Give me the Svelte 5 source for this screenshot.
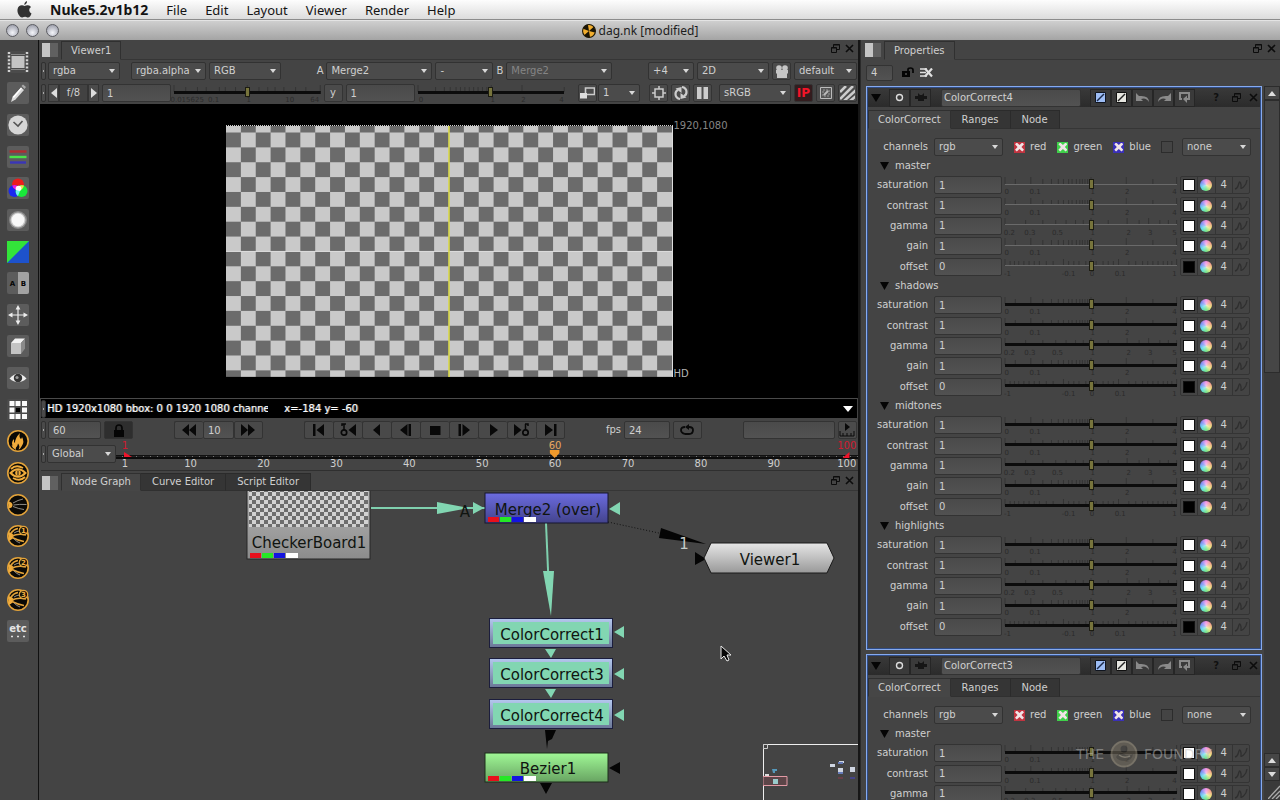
<script>
  const menus = ['File', 'Edit', 'Layout', 'Viewer', 'Render', 'Help'];
  const tools = ['Image', 'Draw', 'Time', 'Channel', 'Color', 'Filter', 'Keyer', 'Merge', 'Transform', '3D', 'Views', 'Other', 'FurnaceCore', 'Ocula', 'Furnace', 'Furnace 1', 'Furnace 2', 'Furnace 3', 'etc'];
  const transport = ['First frame', 'Previous key', 'Play backward', 'Step back', 'Stop', 'Step forward', 'Play forward', 'Next key', 'Last frame'];
  const frames = [1, 10, 20, 30, 40, 50, 60, 70, 80, 90, 100];
  const framePos = (f) => ((9 + (f - 1) * 7.3) / 743) * 100;

  const gradeScale = {
    ticks: [0, 6, 15, 22, 27, 31, 34, 37, 39, 41.5, 43.5, 45, 46.5, 48, 50, 70.5, 86, 99.8],
    tall: [0, 15, 50, 70.5, 99.8],
    marks: [[1, '0'], [17.5, '0.1'], [51, '1'], [71, '2'], [98.5, '4']]
  };
  const gammaScale = {
    ticks: [0, 12, 22, 29.5, 35.5, 41, 45.5, 50, 60, 71, 78, 83.5, 90, 95, 99.8],
    tall: [0, 50, 71, 83.5],
    marks: [[2.5, '0.2'], [14.5, '0.3'], [30.5, '0.5'], [51, '1'], [72, '2'], [84.5, '3'], [98.5, '5']]
  };
  const offsetScale = {
    ticks: [0, 3, 5.5, 8, 11, 14, 17, 20, 24, 28, 34, 37, 40, 43, 47, 50, 53, 57, 60, 63, 66, 72, 76, 80, 83, 86, 89, 92, 94.5, 97, 99.8],
    tall: [0, 34, 50, 66, 99.8],
    marks: [[1.5, '-1'], [37, '-0.1'], [50.5, '0'], [67, '0.1'], [98.5, '1']]
  };
  const gainScale = {
    ticks: [0, 8, 16, 22, 31, 35, 42, 50, 58, 64, 69, 75, 83, 90, 99.8],
    tall: [0, 50, 99.8],
    marks: [[9, '0.015625'], [27, '0.1'], [51, '1'], [79, '10'], [96, '64']]
  };
  const viewGammaScale = {
    ticks: [0, 12, 18, 22, 26, 29, 32, 35, 38, 41, 44, 47, 50, 71, 99.8],
    tall: [0, 50, 71],
    marks: [[2, '0'], [51, '1'], [72, '2'], [98, '4']]
  };

  const knobs = [
    ['saturation', '1', gradeScale],
    ['contrast', '1', gradeScale],
    ['gamma', '1', gammaScale],
    ['gain', '1', gradeScale],
    ['offset', '0', offsetScale]
  ];
  const panels = [
    { name: 'ColorCorrect4', dimMaster: true, bands: ['master', 'shadows', 'midtones', 'highlights'], knobs },
    { name: 'ColorCorrect3', dimMaster: false, bands: ['master'], knobs: knobs.slice(0, 3) }
  ];
  const grades = [['ColorCorrect1', 619], ['ColorCorrect3', 659], ['ColorCorrect4', 700]];
  const chips = ['#e8101c', '#25e825', '#1414e0', '#ffffff'];
</script>

{#snippet drop(label, value, cls)}
  <span class="drop {cls}">
    <select aria-label={label}><option>{value}</option></select>
  </span>
{/snippet}

{#snippet slider(label, scale, cls)}
  <span class="slider {cls}">
    <svg class="ticks" aria-hidden="true">
      {#each scale.ticks as t}
        <line x1="{t}%" x2="{t}%" y1={scale.tall.includes(t) ? 1 : 3} y2="8" />
      {/each}
      {#each scale.marks as [x, s]}
        <text x="{x}%" y="18">{s}</text>
      {/each}
    </svg>
    <input type="range" aria-label="{label} slider" min="0" max="100" value="50" />
  </span>
{/snippet}

{#snippet floatIcon()}
  <svg width="9" height="9" viewBox="0 0 9 9" fill="none" stroke="#0c0c0c"><path d="M2.5 3V.5h6v5H6M2.5 1h6" /><path d="M.5 3.5h5v5h-5zM.5 4h5" /></svg>
{/snippet}

{#snippet closeIcon()}
  <svg width="9" height="9" viewBox="0 0 9 9" fill="none" stroke="#0c0c0c" stroke-width="1.6"><path d="M1 1l7 7M8 1l-7 7" /></svg>
{/snippet}

{#snippet windowButtons()}
  <span class="winbtns">
    <button aria-label="Float">{@render floatIcon()}</button>
    <button aria-label="Close">{@render closeIcon()}</button>
  </span>
{/snippet}

{#snippet toolIcon(i)}
  <svg width="22" height="22" viewBox="0 0 22 22">
    {#if i < 12 || i === 18}<rect width="22" height="22" rx="2" fill={i === 0 || i === 11 ? '#4b4b4b' : '#5c5c5c'} />{/if}
    {#if i === 0}
      <rect x="4.500" y="5" width="13" height="12" fill="#c4c4c4" />
      <path d="M2 1v20M20 1v20" stroke="#d2d2d2" stroke-width="2.400" stroke-dasharray="2 1.600" /><path d="M4 3.500h14M4 18.500h14" stroke="#888" />
    {:else if i === 1}
      <path d="M4 20l1.500-5L14 5.500l3 2.500-8.500 9.500z" fill="#d8d8d8" /><path d="M5.500 15l8.500-9.500 1 1L7 16z" fill="#fff" /><path d="M14.500 4l1.500-1.500 3 2.500-1.500 2z" fill="#a8a8a8" />
    {:else if i === 2}
      <circle cx="11" cy="11" r="9.600" fill="#d6d6d6" /><path d="M6.500 8l4.500 4 4.500-5" stroke="#555" stroke-width="1.600" fill="none" />
    {:else if i === 3}
      <path d="M2.500 5.500h17" stroke="#b02c30" stroke-width="2.400" /><path d="M2.500 11h17" stroke="#49e449" stroke-width="2.400" /><path d="M3 16.500h16" stroke="#3a35b8" stroke-width="2.400" />
    {:else if i === 4}
      <circle cx="11" cy="7.500" r="6" fill="#ee1c1c" /><circle cx="7.500" cy="14" r="6" fill="#1a28f0" /><circle cx="14.500" cy="14" r="6" fill="#18e83a" />
      <path d="M5.200 8.500A6 6 0 0 1 11.500 9.500L9 13A6 6 0 0 1 5.200 8.500z" fill="#f020d8" /><path d="M11.500 9.500Q14 7.500 17 8.500 16 12.500 12.500 13.500z" fill="#f0e050" /><circle cx="11.500" cy="11.500" r="2.800" fill="#fff" /><path d="M9 13l4 1-2 5q-3-2-2-6z" fill="#70f0f0" />
    {:else if i === 5}
      <circle cx="11" cy="11" r="9" fill="#8a8a8a" /><circle cx="11" cy="11" r="7.600" fill="#c8c8c8" /><circle cx="11" cy="11" r="6.400" fill="#f8f8f8" />
    {:else if i === 6}
      <path d="M0 0h22v22H0z" fill="#1d52cc" /><path d="M0 0h22L0 22z" fill="#33e43a" />
    {:else if i === 7}
      <path d="M11 0h9a2 2 0 0 1 2 2v18a2 2 0 0 1-2 2h-9z" fill="#a2a2a2" />
      <text x="5.500" y="14" class="ab">A</text><text x="16.500" y="14" class="ab">B</text>
    {:else if i === 8}
      <path d="M11 4v14M4 11h14" stroke="#ececec" stroke-width="1.200" /><path d="M11 1l2.400 4.500H8.600zM11 21l2.400-4.500H8.600zM1 11l4.500-2.400v4.800zM21 11l-4.500-2.400v4.800z" fill="#ececec" />
    {:else if i === 9}
      <path d="M4 8l10 0v11H4z" fill="#c4c4c4" /><path d="M4 8l4-4.500h10L14 8z" fill="#f2f2f2" /><path d="M14 8l4-4.500v10L14 19z" fill="#8a8a8a" />
    {:else if i === 10}
      <path d="M2.500 11.500Q11 2 19.500 11.500 11 19 2.500 11.500z" fill="#eee" /><circle cx="11" cy="11" r="4.200" fill="#333" /><circle cx="10" cy="10.500" r="1.600" fill="#999" />
    {:else if i === 11}
      <g fill="#fafafa"><path d="M2.500 2h5v5h-5zM8.500 2h5v5h-5zM15 2h5v5h-5zM2.500 8.500h5v5h-5zM15 8.500h5v5h-5zM2.500 15h5v5h-5zM8.500 15h5v5h-5zM15 15h5v5h-5z" /></g><path d="M9 9h4v4H9z" fill="#000" />
    {:else if i === 18}
      <text x="11" y="11.500" class="etc">etc</text><path d="M4 16.500h2M10 16.500h2M16 16.500h2" stroke="#e0e0e0" stroke-width="1.600" />
    {:else}
      <circle cx="11" cy="11" r="10.200" fill="#0b0a06" stroke="#e3a33a" stroke-width="1.600" />
      {#if i === 12}
        <path d="M5.500 15.500Q4 12 7 9q-.5 3 1 4Q8 8 13 3q-1.500 4 1 6 1-1 1-2 3 5-.5 9.500-1.500 3-3 3 2-3-.5-6-.5 3-2 4-.5 1 0 2.500-3-1-4.500-4.500z" fill="#f0ac3c" />
      {:else if i === 13}
        <path d="M4 7Q9 2 16 6M18 15q-5 5-12 1" stroke="#f0ac3c" stroke-width="2" fill="none" /><path d="M3.500 11Q11 3.500 18.500 11 11 18.500 3.500 11z" fill="none" stroke="#f0ac3c" stroke-width="2" /><circle cx="11" cy="11" r="2.800" fill="#f0ac3c" /><path d="M11 9v4" stroke="#111" />
      {:else if i === 14}
        <path d="M1.500 7.500Q5.500 8 5.500 11t-4 3.500z" fill="#f0ac3c" />
        <g stroke="#8f8d86" fill="none"><path d="M6 9q5-3 10-4M6.500 11q6-1 13-.5M6 12.500q6 2.500 11 3" /></g>
      {:else}
        <path d="M1.500 7Q6.500 8 6.500 11t-5 5z" fill="#f0ac3c" />
        <g stroke="#e3a33a" stroke-width="1.600" fill="none"><path d="M4 8Q7 4 11 3.500M5 11q6-3 14-1M5 12.500q6 3 12 4" /></g>
        <g stroke="#8f8d86" fill="none"><path d="M7 8q3-2 6-2M7 14q3 3 6 4" /></g>
        <circle cx="16.500" cy="5.500" r="4.200" fill="#1a1408" stroke="#e3a33a" stroke-width="1.200" /><text x="16.500" y="8.200" class="badge">{i - 14}</text>
      {/if}
    {/if}
  </svg>
{/snippet}

{#snippet playIcon(i)}
  <svg width="20" height="14" viewBox="0 0 20 14" fill="#080808" stroke="#080808" stroke-width="0">
    {#if i === 0}<path d="M4 1h2.500v12H4zM15 1v12L7.500 7z" />
    {:else if i === 1}<path d="M18 1v12l-7.500-6z" /><path d="M4 3V1h4M6 1v6" stroke-width="1.500" fill="none" /><circle cx="6" cy="9.500" r="2.700" fill="none" stroke-width="1.700" />
    {:else if i === 2}<path d="M13 1v12L6 7z" />
    {:else if i === 3}<path d="M11.500 1v12L4 7zM12.500 1H15v12h-2.500z" />
    {:else if i === 4}<path d="M5 3h10.500v9H5z" />
    {:else if i === 5}<path d="M8.500 1v12L16 7zM4.500 1H7v12H4.500z" />
    {:else if i === 6}<path d="M7 1v12l8-6z" />
    {:else if i === 7}<path d="M2 1v12l7.500-6z" /><path d="M16 3V1h-3M13.500 1v6" stroke-width="1.500" fill="none" /><circle cx="13.500" cy="9.500" r="2.700" fill="none" stroke-width="1.700" />
    {:else if i === 8}<path d="M14 1h2.500v12H14zM5 1v12l8-6z" />
    {:else if i === 9}<path d="M10 1v12L3 7zM17 1v12l-7-6z" />
    {:else}<path d="M10 1v12l7-6zM3 1v12l7-6z" />{/if}
  </svg>
{/snippet}

{#snippet knobRow(id, label, value, scale, thin)}
  <div class="knob">
    <label for={id}>{label}</label>
    <input {id} type="text" value={value} />
    {@render slider(label, scale, thin ? 'thin' : 'thick')}
    <span class="knobbtns">
      <button aria-label="{label} colour"><i class="swatch" class:black={value === '0'}></i></button>
      <button aria-label="{label} wheel"><i class="wheel"></i></button>
      <button>4</button>
      <button aria-label="{label} animation"><svg width="14" height="12" viewBox="0 0 14 12" fill="none" stroke="#2f2f2f" stroke-width="1.300"><path d="M1 10Q3.500 9.500 4.500 5.500T6.500 4 7 8.500 9.500 8 13 1" /></svg></button>
    </span>
  </div>
{/snippet}

{#snippet panel(p, n)}
  <article class="panel">
    <header>
      <button class="bare" aria-label="Collapse"><svg width="10" height="8"><path d="M0 0h10L5 8z" fill="#050505" /></svg></button>
      <span class="joined hb">
        <button aria-label="Centre node"><svg width="9" height="9"><circle cx="4.500" cy="4.500" r="3" fill="none" stroke="#ddd" stroke-width="1.400" /></svg></button>
        <button aria-label="Hide inputs"><svg width="12" height="9"><path d="M0 3h3V0l2 2h2l2-2v3h3v3H9v2H3V6H0z" fill="#151515" /></svg></button>
      </span>
      <input class="name" aria-label="Node name" type="text" value={p.name} />
      <span class="joined hb actions">
        <button aria-label="Node colour"><svg width="11" height="11"><path d="M.5.5h10v10H.5z" fill="#9dbdf5" stroke="#10151f" /><path d="M2 9l7-7" stroke="#1b2a4a" stroke-width="1.500" /></svg></button>
        <button aria-label="GL colour"><svg width="11" height="11"><path d="M.5.5h10v10H.5z" fill="#e6e6e0" stroke="#101010" /><path d="M2 9l7-7" stroke="#222" stroke-width="1.500" /></svg></button>
        <button aria-label="Undo"><svg width="14" height="9"><path d="M0 0v8h7L5 6q5-2 8 3 0-7-10-6z" fill="#8a8a8a" /></svg></button>
        <button aria-label="Redo"><svg width="14" height="9"><path d="M14 0v8H7l2-2Q4 4 1 9q0-7 10-6z" fill="#8a8a8a" /></svg></button>
        <button aria-label="Revert"><svg width="12" height="11" fill="none" stroke="#8a8a8a" stroke-width="2"><path d="M3 7H1V1h9v6H7" /><path d="M8 3.500v7.500L4 7z" fill="#8a8a8a" stroke="none" /></svg></button>
      </span>
      <button class="bare help">?</button>
      {@render windowButtons()}
    </header>
    <nav class="tabs ptabs">
      <button class="on">ColorCorrect</button><button>Ranges</button><button>Node</button><span class="fill"></span>
    </nav>
    <div class="channels">
      <span class="cl">channels</span>
      {@render drop('channels', 'rgb', 'wrgb')}
      <label class="ck red"><input type="checkbox" checked />red</label>
      <label class="ck green"><input type="checkbox" checked />green</label>
      <label class="ck blue"><input type="checkbox" checked />blue</label>
      <input class="blank" type="checkbox" aria-label="fourth channel" />
      {@render drop('extra channel', 'none', 'wrgb')}
    </div>
    {#each p.bands as band, b}
      <section class="band">
        <button class="bandhead"><svg width="9" height="8"><path d="M0 0h9L4.500 8z" fill="#050505" /></svg>{band}</button>
        <div class="rows">
          {#each p.knobs as [label, value, scale]}
            {@render knobRow(`p${n}-${band}-${label}`, label, value, scale, p.dimMaster && b === 0)}
          {/each}
        </div>
      </section>
    {/each}
  </article>
{/snippet}

<div class="desktop">
  <nav class="menubar">
    <svg width="15" height="17" viewBox="0 0 15 17"><path d="M10 0q.3 2.600-2.600 4Q7 1.500 10 0z" fill="#333" /><path d="M7.600 5Q9 4 11 4.200q2 .2 3 1.800-2 1.200-1.800 3.300.2 2.200 2.300 3.200-1.300 4-3.500 4-.8 0-1.700-.5-1.300-.5-2.600.1-1 .5-1.600.4C2.600 16.300 0 12 .5 8.500.9 5.500 3 4.200 5 4.300q1.500.2 2.600.7z" fill="#333" /></svg>
    <button class="appname">Nuke5.2v1b12</button>
    {#each menus as m}<button>{m}</button>{/each}
  </nav>

  <div class="titlebar">
    <span class="lights"><button aria-label="Close window"></button><button aria-label="Minimise window"></button><button aria-label="Zoom window"></button></span>
    <h1>
      <svg width="14" height="14" viewBox="0 0 13 13"><circle cx="6.500" cy="6.500" r="6" fill="#f2ae2e" stroke="#1b1505" /><path d="M6.500 6.500L1 4.500Q2.500 1 5.500.8zM6.500 6.500L11 2.500q2 2.500 1 5.500zM6.500 6.500l1 6Q4 13 2 10.500z" fill="#1b1505" /></svg>
      dag.nk [modified]
    </h1>
  </div>

  <main>
    <aside class="toolbar">
      {#each tools as t, i}<button aria-label={t}>{@render toolIcon(i)}</button>{/each}
    </aside>

    <div class="center">
      <nav class="tabs">
        <i class="pane"></i><button class="on">Viewer1</button><span class="fill"></span>{@render windowButtons()}
      </nav>

      <div class="bar">
        <div class="group"><i class="handle"></i>{@render drop('Layer', 'rgba', 'w72 gapr')}{@render drop('Alpha', 'rgba.alpha', 'w74')}{@render drop('Display channels', 'RGB', 'w72')}</div>
        <div class="group"><span>A</span>{@render drop('Input A', 'Merge2', 'w105')}{@render drop('Wipe', '-', 'w57')}<span>B</span>{@render drop('Input B', 'Merge2', 'w105 dim')}</div>
        <div class="group">
          {@render drop('Zoom', '+4', 'w45')}{@render drop('View mode', '2D', 'w72')}
          <button class="ib" aria-label="Camera"><svg width="14" height="13" fill="#c6c6c6"><circle cx="4" cy="3" r="2.800" /><circle cx="10" cy="3" r="2.800" /><path d="M1 5h12v3l-1 1v4H2V9L1 8z" /></svg></button>
          {@render drop('View', 'default', 'w63')}
        </div>
      </div>

      <div class="bar">
        <div class="group grow">
          <i class="handle"></i>
          <span class="joined fstop"><button aria-label="Stop down"><svg width="6" height="10"><path d="M6 0v10L0 5z" fill="#ddd" /></svg></button><button class="f8">f/8</button><button aria-label="Stop up"><svg width="6" height="10"><path d="M0 0v10l6-5z" fill="#ddd" /></svg></button></span>
          <input class="w69" aria-label="Gain" type="text" value="1" />
          {@render slider('Gain', gainScale, 'thick')}
          <button class="ib">y</button>
          <input class="w69" aria-label="Gamma" type="text" value="1" />
          {@render slider('Gamma', viewGammaScale, 'thick')}
        </div>
        <div class="group tight pl">
          <button class="ib" aria-label="Proxy"><svg width="15" height="12"><path d="M5.500 1h9v6.500h-9z" fill="none" stroke="#ccc" stroke-width="1.600" /><path d="M0 6h7v5.500H0z" fill="#ddd" /></svg></button>
          {@render drop('Downrez', '1', 'w42')}
        </div>
        <div class="group roi">
          <button class="ib" aria-label="Region of interest"><svg width="14" height="14" fill="none" stroke="#ccc" stroke-width="1.500"><path d="M3 3h8v8H3zM7 0v3M7 11v3M0 7h3M11 7h3" /></svg></button>
          <button class="ib" aria-label="Refresh"><svg width="16" height="14" fill="none" stroke="#ccc" stroke-width="2.200"><path d="M7 13Q2.500 12 2.500 8q0-3 2.500-4M9 1q4.500 1 4.500 5 0 3-2.500 4" /><path d="M2.500 2.500L8.500 1v6zM13.500 11.500L7.500 13V7z" fill="#ccc" stroke="none" /></svg></button>
          <button class="ib" aria-label="Pause"><svg width="11" height="12"><path d="M0 0h4.500v12H0zM6.500 0H11v12H6.500z" fill="#ccc" /></svg></button>
        </div>
        <div class="group lead">
          {@render drop('Viewer process', 'sRGB', 'w72')}
          <button class="ib ip">IP</button>
          <button class="ib" aria-label="Clipping"><svg width="12" height="12"><path d="M.5.5h11v11H.5z" fill="#555" stroke="#bbb" /><path d="M3 3h6v6H3z" fill="none" stroke="#999" stroke-dasharray="2 1" /><path d="M4 8l4-4" stroke="#bbb" stroke-width="2" /></svg></button>
          <button class="ib" aria-label="Zebra"><svg width="15" height="14" stroke="#ccc" stroke-width="2.600"><path d="M0 6l6-6M0 13L13 0M4 15L16 4M10 15l6-5" /></svg></button>
        </div>
      </div>

      <div class="viewport">
        <div class="frame">
          <svg viewBox="0 0 1920 1080">
            <defs><pattern id="chk" y="28" width="128" height="128" patternUnits="userSpaceOnUse"><path d="M0 0h128v128H0z" fill="#c9c9c9" /><path d="M0 0h64v64H0zM64 64h64v64H64z" fill="#6b6b6b" /></pattern></defs>
            <rect width="1920" height="1080" fill="url(#chk)" />
            <path d="M0 540h1920" stroke="#e4e4e4" stroke-width="4" />
            <path d="M960 0v1080" stroke="#d8d84a" stroke-width="7" />
          </svg>
          <span class="res">1920,1080</span><span class="fmt">HD</span>
        </div>
      </div>

      <div class="info"><i class="handle"></i><span class="clip">HD 1920x1080 bbox: 0 0 1920 1080 channe</span><span>x=-184 y= -60</span><svg width="10" height="6"><path d="M0 0h10L5 6z" fill="#fff" /></svg></div>

      <div class="bar play">
        <div class="group"><i class="handle"></i><input class="w53" aria-label="Current frame" type="text" value="60" /><button class="pb dark" aria-label="Lock range"><svg width="12" height="13"><path d="M1 6h10v7H1z" fill="#050505" /><path d="M3 6V4q0-3 3-3t3 3v2" fill="none" stroke="#050505" stroke-width="1.700" /></svg></button></div>
        <div class="group joined"><button class="pb" aria-label="Skip back">{@render playIcon(9)}</button><input class="w31" aria-label="Frame increment" type="text" value="10" /><button class="pb" aria-label="Skip forward">{@render playIcon(10)}</button></div>
        <div class="group joined">{#each transport as t, i}<button class="pb" aria-label={t}>{@render playIcon(i)}</button>{/each}</div>
        <div class="group"><label for="fps">fps</label><input id="fps" class="w45" type="text" value="24" /><button class="pb" aria-label="Loop mode"><svg width="14" height="12" fill="none" stroke="#0a0a0a" stroke-width="1.800"><path d="M5 3Q1 3 1 6t4 4h4q4 0 4-4 0-3-4-3" /><path d="M9 0L5 3l4 3z" fill="#0a0a0a" stroke="none" /></svg></button></div>
        <div class="group"><input class="w92" aria-label="Frame range" type="text" value="" /><button class="ib" aria-label="Playback range"><svg width="16" height="14"><path d="M6 0v8l5-4z" fill="#0a0a0a" /><path d="M1 8v5h14V8M4 10v3M8 10v3M12 10v3" fill="none" stroke="#0a0a0a" /></svg></button></div>
      </div>

      <div class="timeline">
        <i class="handle"></i>{@render drop('Frame range source', 'Global', 'w69')}
        <div class="ruler">
          <i class="track"></i>
          {#each frames as f}<span class="fr" style="left:{framePos(f)}%">{f}</span>{/each}
          <span class="mark in" style="left:{framePos(1)}%">1<svg width="8" height="6"><path d="M0 0l8 5H0z" fill="#f0142a" /></svg></span>
          <span class="mark cur" style="left:{framePos(60)}%">60<svg width="10" height="8"><path d="M0 0h10v3L5 8 0 3z" fill="#f09a2c" /></svg></span>
          <span class="mark out" style="left:{framePos(100)}%">100<svg width="8" height="6"><path d="M7 0v6H0z" fill="#f0142a" /></svg></span>
        </div>
      </div>

      <nav class="tabs low">
        <i class="pane"></i><button class="on">Node Graph</button><button>Curve Editor</button><button>Script Editor</button><span class="fill"></span>{@render windowButtons()}
      </nav>

      <div class="dag">
        <svg class="graph">
          <defs>
            <pattern id="mini" width="8" height="8" patternUnits="userSpaceOnUse"><path d="M0 0h8v8H0z" fill="#d2d2d2" /><path d="M0 0h4v4H0zM4 4h4v4H4z" fill="#6d6d6d" /></pattern>
            <linearGradient id="gGrey" x2="0" y2="1"><stop stop-color="#bdbdbd" /><stop offset="1" stop-color="#8c8c8c" /></linearGradient>
            <linearGradient id="gBlue" x2="0" y2="1"><stop stop-color="#6c6ce0" /><stop offset="1" stop-color="#43438c" /></linearGradient>
            <linearGradient id="gGreen" x2="0" y2="1"><stop stop-color="#a0f896" /><stop offset="1" stop-color="#68a462" /></linearGradient>
            <linearGradient id="gView" x2="0" y2="1"><stop stop-color="#e6e6e6" /><stop offset="1" stop-color="#999" /></linearGradient>
            <linearGradient id="gSel" x2="0" y2="1"><stop stop-color="#b4c8ee" /><stop offset="1" stop-color="#6a7796" /></linearGradient>
          </defs>
          <g transform="translate(-40 -491)">
            <path d="M371 508h114" stroke="#7fd0ae" stroke-width="2" />
            <path d="M437 502l32 6-32 6zM473 502l11 6-11 6z" fill="#82d6b2" />
            <path d="M546 523l3 70" stroke="#7fd0ae" stroke-width="2" /><path d="M543 571h11l-3 45z" fill="#82d6b2" />
            <path d="M608 522l60 13" stroke="#111" stroke-width="1" stroke-dasharray="1 2" /><path d="M661 528l45 16-47-6z" fill="#050505" />
            <path d="M620 502v13l-11-6zM624 626v12l-10-6zM624 668v12l-10-6zM624 709v12l-10-6z" fill="#82d6b2" />
            <path d="M545 649h11l-5 9zM545 689h11l-5 9z" fill="#82d6b2" />
            <path d="M545 730h11l-4 9-4 2-1 8zM620 762v12l-11-6zM540 783h12l-6 11zM695 552v13l11-6z" fill="#050505" />

            <rect x="247" y="480" width="123" height="79" fill="url(#gGrey)" stroke="#262626" />
            <path d="M249 491h119v36H249z" fill="url(#mini)" />
            <text x="309" y="548">CheckerBoard1</text>
            <rect x="485" y="493" width="123" height="30" fill="url(#gBlue)" stroke="#17172e" />
            <text x="548" y="515">Merge2 (over)</text>
            {#each grades as [name, y]}
              <rect x="489.500" y={y - 0.5} width="123" height="29" fill="url(#gSel)" stroke="#1b1d3c" />
              <rect x="493" y={y + 3} width="116" height="22" fill="#82d6b2" />
              <text x="552" y={y + 21}>{name}</text>
            {/each}
            <rect x="485" y="753" width="123" height="29" fill="url(#gGreen)" stroke="#1c2e1a" />
            <text x="548" y="774">Bezier1</text>
            <path d="M704 558l7-15h116l7 15-7 15H711z" fill="url(#gView)" stroke="#1a1a1a" />
            <text x="770" y="565">Viewer1</text>
            <text x="465" y="517">A</text><text x="684" y="549" class="light">1</text>
            {#each [[250, 553], [488, 517], [488, 776]] as [x, y]}
              {#each chips as c, k}<rect x={x + k * 12} {y} width={k === 3 ? 12 : 11} height="5" fill={c} />{/each}
            {/each}
            <path d="M721 646v13l3-3 3 5 2-1-2-5h4z" fill="#060606" stroke="#e8e8e8" />
          </g>
        </svg>
        <svg class="minimap" width="95" height="56" aria-hidden="true">
          <path d="M.5 56V.5H95" fill="none" stroke="#eee" /><path d="M.5.5h4v4h-4z" fill="#444" stroke="#ccc" />
          <path d="M0 32.500h24v9H0z" fill="#5c4548" stroke="#e29aa5" /><path d="M10 35h5v5h-5z" fill="#9cc" /><path d="M9 25h5v2h-2v2h-2z" fill="#59b" /><path d="M2 30h4v2H2z" fill="#ddd" />
          <path d="M67 20h5v3h-5zM76 17h5v2h-5zM75 24h5v4h-5zM87 23h5v5h-5z" fill="#cfd6e2" /><path d="M75 19h5M75 29h5" stroke="#667bb8" stroke-width="2" /><path d="M75 34h5" stroke="#8c3a4a" /><path d="M87 34h5" stroke="#44c" />
        </svg>
      </div>
    </div>

    <div class="props">
      <nav class="tabs"><i class="pane"></i><button class="on">Properties</button><span class="fill"></span>{@render windowButtons()}</nav>
      <div class="ptools">
        <input class="w27" aria-label="Max panels" type="text" value="4" />
        <button class="bare" aria-label="Lock panels"><svg width="12" height="11"><path d="M0 4h8v6H0z" fill="#050505" /><path d="M6 4V2.500Q6 1 8.500 1T11 3v3" fill="none" stroke="#050505" stroke-width="1.700" /><path d="M4 6v2" stroke="#777" /></svg></button>
        <button class="bare" aria-label="Clear panels"><svg width="13" height="10" stroke="#e0e0e0"><path d="M0 1h7M0 4.500h6M0 8h7" stroke-width="1.500" /><path d="M5 .500l7 8M12 .500l-7 8" stroke-width="2.200" /></svg></button>
      </div>
      <div class="scroller">
        <div class="panels">{#each panels as p, n}{@render panel(p, n)}{/each}</div>
        <div class="sbar">
          <button aria-label="Scroll up"><svg width="8" height="5"><path d="M0 5h8L4 0z" fill="#ddd" /></svg></button>
          <i class="grip"></i>
          <span class="grow"></span>
          <button aria-label="Scroll up one line"><svg width="8" height="5"><path d="M0 5h8L4 0z" fill="#ddd" /></svg></button>
          <button aria-label="Scroll down"><svg width="8" height="5"><path d="M0 0h8L4 5z" fill="#ddd" /></svg></button>
          <svg class="corner" width="12" height="14"><path d="M0 14L12 1M4 14l8-8M8 14l4-4" stroke="#aaa" stroke-width="1.400" /></svg>
        </div>
        <div class="watermark"><span>THE</span><svg width="28" height="28"><circle cx="14" cy="14" r="12.500" fill="#7c7464" stroke="#aaa08a" stroke-width="2" /><circle cx="14" cy="9" r="3.500" fill="#494743" /><path d="M6 17q4-6 8-3t9 0q-1 7-8 7t-9-4z" fill="#59544a" /><path d="M9 15q5 4 11 1" stroke="#bbb29d" stroke-width="1.500" fill="none" /></svg><span>FOUNDRY</span></div>
      </div>
    </div>
  </main>
</div>

<style>
  :global(body) { background: #444; overflow: hidden; }
  * { box-sizing: border-box; }
  .desktop { display: flex; flex-direction: column; height: 100vh; font: 10px/14px "DejaVu Sans", sans-serif; color: #cfcfcf; background: #444; overflow: hidden; }
  button, input, select { font: inherit; color: inherit; margin: 0; padding: 0; border: 0; background: none; min-width: 0; }
  button { display: inline-flex; align-items: center; justify-content: center; flex: none; white-space: nowrap; }
  svg { display: block; flex: none; }
  i { display: block; flex: none; }

  .menubar { display: flex; align-items: center; gap: 18px; height: 20px; padding-left: 17px; background: linear-gradient(#fdfdfd, #dcdcdc); border-bottom: 1px solid #8c8c8c; font: 13px/18px "Noto Sans", sans-serif; color: #141414; flex: none; }
  .appname { font-weight: 700; font-size: 14px; }
  .titlebar { display: flex; align-items: center; height: 20px; padding: 0 6px; background: linear-gradient(#cfcfcf, #a4a4a4); border-top: 1px solid #e4e4e4; flex: none; }
  .lights { display: flex; gap: 7px; width: 64px; }
  .lights button { width: 13px; height: 13px; border-radius: 50%; border: 1px solid #5c5d63; background: radial-gradient(circle at 50% 70%, #f4f5fa, #a0a2ae 80%); }
  h1 { display: flex; align-items: center; gap: 3px; margin: 0 auto; padding-right: 64px; font: 12px/18px "Noto Sans", sans-serif; color: #1c1c1c; }

  main { display: grid; grid-template-columns: 38px minmax(0, 1fr) 420px; flex: 1; min-height: 0; }
  .toolbar { display: grid; grid-template-rows: repeat(19, 1fr); height: 100%; max-height: 607px; padding: 6px 3px 0 0; }
  .ab, .etc, .badge { text-anchor: middle; font-weight: 700; }
  .ab { font-size: 7px; fill: #050505; }
  .etc { font-size: 10px; fill: #e4e4e4; }
  .badge { font-size: 7px; fill: #f0b040; }

  .center { display: flex; flex-direction: column; min-width: 0; min-height: 0; padding-left: 2px; border-right: 2px solid #161616; border-left: 1px solid #111; }
  .tabs { display: flex; height: 20px; flex: none; }
  .tabs > button { padding: 0 11px; height: 19px; margin-top: 1px; background: #353535; border: 1px solid #2b2b2b; border-left-width: 0; border-bottom-color: #303030; }
  .tabs > button.on { background: #464646; border: 1px solid #303030; border-bottom-color: #464646; padding: 0 9px; }
  .tabs .fill { flex: 1; border-bottom: 1px solid #363636; }
  .pane { width: 16px; height: 14px; margin: 3px 3px 0 1px; background: linear-gradient(90deg, #c4c4c4 50%, #606060 50%); }
  .winbtns { display: flex; gap: 5px; padding: 0 4px 2px 0; border-bottom: 1px solid #363636; }
  .low { padding-top: 2px; height: 21px; border-top: 1px solid #2f2f2f; }
  .low > button { margin-top: 0; height: 18px; }

  .bar { display: flex; justify-content: space-between; align-items: center; height: 22px; flex: none; padding-right: 1px; }
  .group { display: flex; align-items: center; gap: 3px; }
  .group.grow { flex: 1; min-width: 0; }
  .group.tight { gap: 1px; }
  .pl { padding: 0 9px 0 14px; }
  .lead { padding-left: 7px; }
  .handle { width: 5px; height: 18px; margin-right: -1px; border: 1px solid #303030; border-radius: 2px; background: radial-gradient(circle, #aaa 1px, #4a4a4a 1px); }
  .play { height: 24px; }
  .joined { gap: 0; display: flex; }

  input[type='text'] { height: 18px; padding-left: 4px; background: linear-gradient(#4a4a4a, #525252); border: 1px solid #333; border-radius: 2px; }
  .drop { position: relative; display: inline-flex; height: 18px; flex: none; background: #4b4b4b; border: 1px solid #323232; border-radius: 2px; }
  .drop select { appearance: none; width: 100%; padding: 0 14px 0 4px; outline: 0; }
  .drop::after { content: ''; position: absolute; right: 4px; top: 6px; border: 3px solid transparent; border-top: 4px solid #d8d8d8; border-bottom: 0; pointer-events: none; }
  .dim { color: #858585; }
  .gapr { margin-right: 8px; }
  .w27 { width: 27px; } .w31 { width: 31px; } .w42 { width: 42px; } .w45 { width: 46px; } .w53 { width: 53px; } .w57 { width: 58px; } .w63 { width: 63px; }
  .w69 { width: 69px; } .w72 { width: 72px; } .w74 { width: 75px; } .w92 { width: 92px; } .w105 { width: 106px; }
  .ib { width: 19px; height: 18px; background: #4b4b4b; border: 1px solid #343434; border-radius: 2px; }
  .ip { background: #331c1e; color: #f41428; font-weight: 700; font-size: 12px; }
  .fstop button { height: 18px; width: 11px; background: #4b4b4b; border: 1px solid #343434; }
  .fstop .f8 { width: 29px; background: #424242; }
  .pb { width: 29px; height: 18px; background: #494949; border: 1px solid #333; border-right-width: 0; border-radius: 2px; }
  .pb:last-child { border-right-width: 1px; }
  .dark { background: #2e2e2e; }

  .slider { position: relative; display: block; flex: 1; height: 18px; min-width: 0; }
  .ticks { width: 100%; height: 20px; overflow: visible; }
  .ticks line { stroke: #343434; }
  .ticks text { font-size: 7px; text-anchor: middle; fill: #2b2b2b; }
  .slider input { appearance: none; position: absolute; inset: 3px 0 auto; width: 100%; height: 10px; background: linear-gradient(#0c0c0c, #0c0c0c) center / 100% 3px no-repeat; }
  .thin input { background-image: linear-gradient(#6a6a6a, #6a6a6a); background-size: 100% 1px; }
  .slider input::-webkit-slider-thumb { appearance: none; width: 5px; height: 10px; background: #77743c; border: 1px solid #1c1c12; }

  .viewport { display: flex; align-items: center; justify-content: center; height: 294px; background: #000; margin-left: -1px; flex: none; }
  .frame { position: relative; width: 55%; max-width: 447px; border-top: 1px dotted #ccc; }
  .frame svg { width: 100%; height: auto; border-right: 1px solid #ddd; }
  .frame span { position: absolute; left: 100%; padding-left: 1px; }
  .res { top: -7px; color: #858585; }
  .fmt { bottom: -4px; color: #b4b4b4; }

  .info { display: flex; align-items: center; gap: 2px; height: 20px; background: #000; color: #fff; margin-right: 1px; border-top: 1px solid #4a4a4a; flex: none; text-shadow: 1px 0 0 #ffffff80; padding-right: 4px; }
  .clip { width: 221px; overflow: hidden; white-space: nowrap; margin-right: 14px; }
  .info svg { margin-left: auto; }

  .timeline { display: flex; align-items: center; gap: 2px; height: 28px; flex: none; padding-bottom: 4px; }
  .ruler { position: relative; flex: 1; align-self: stretch; height: 28px; margin-left: -2px; }
  .track { height: 4px; margin-top: 13px; border-top: 1px solid #111; border-bottom: 2px solid #0c0c0c; background: repeating-linear-gradient(90deg, #222 0 6px, #777 6px 7px); }
  .fr { position: absolute; top: 15px; transform: translateX(-50%); }
  .mark { position: absolute; top: 0; transform: translateX(-50%); display: flex; flex-direction: column; align-items: center; line-height: 8px; }
  .in, .out { color: #d01a30; }
  .cur { color: #e8a860; }
  .in svg { margin-left: 6px; margin-top: 2px; }
  .out svg { margin-top: 2px; }

  .dag { position: relative; flex: 1; min-height: 0; overflow: hidden; margin-left: -1px; }
  .graph { width: 100%; height: 100%; }
  .graph text { font-size: 15px; text-anchor: middle; fill: #101410; }
  .graph .light { fill: #c4ccc8; }
  .minimap { position: absolute; right: 0; bottom: 0; }

  .props { display: flex; flex-direction: column; min-width: 0; min-height: 0; padding-left: 3px; border-left: 1px solid #2a2a2a; }
  .bare { background: none; border: 0; }
  .ptools { display: flex; align-items: center; gap: 6px; height: 25px; padding: 0 2px; flex: none; }
  .ptools input { height: 16px; margin-right: 3px; }
  .scroller { position: relative; display: flex; gap: 2px; flex: 1; min-height: 0; overflow: hidden; padding: 1px 0 0 2px; }
  .panels { flex: 1; display: flex; flex-direction: column; gap: 4px; min-width: 0; }
  .panel { flex: none; border: 1px solid #86aaee; box-shadow: inset 0 0 0 1px #2f4c86; padding: 1px 1px 12px; }
  .panel header { display: flex; align-items: center; height: 19px; padding: 0 2px 0 3px; background: linear-gradient(#393939, #2b2b2b); }
  .hb button { width: 21px; height: 18px; border: 1px solid #262626; background: #3a3a3a; }
  header .hb { margin-left: 8px; }
  header .hb.actions { margin-left: 9px; margin-right: auto; }
  .name { width: 140px; margin-left: 10px; }
  header input.name { padding-left: 2px; }
  .help { color: #101010; font-weight: 700; margin-right: 13px; }
  header .winbtns { gap: 8px; padding: 0; border: 0; }
  .ptabs { height: 22px; padding-top: 2px; }
  .channels { display: flex; align-items: center; height: 28px; padding: 8px 9px 0 0; }
  .channels .cl { width: 60px; text-align: right; margin-right: 6px; }
  .wrgb { width: 69px; }
  .ck { display: flex; align-items: center; gap: 5px; margin-left: 11px; }
  .ck input { appearance: none; width: 11px; height: 11px; display: grid; place-items: center; background: #c03440; }
  .ck input::before { content: ''; width: 9px; height: 9px; background: #f0e4e6; clip-path: polygon(20% 0, 50% 28%, 80% 0, 100% 20%, 72% 50%, 100% 80%, 80% 100%, 50% 72%, 20% 100%, 0 80%, 28% 50%, 0 20%); }
  .green input { background: #3fd04a; }
  .blue input { background: #3a30b8; }
  .blank { appearance: none; width: 12px; height: 12px; border: 1px solid #2c2c2c; margin-left: 10px; margin-right: auto; }
  .band { display: grid; grid-template-rows: 18px 102px; }
  .bandhead { justify-content: start; gap: 6px; padding-left: 12px; }
  .rows { display: grid; grid-template-rows: repeat(5, 1fr); align-items: center; }
  .knob { display: flex; align-items: center; gap: 3px; padding-right: 10px; height: 18px; }
  .knob label { width: 60px; text-align: right; margin-right: 3px; }
  .knob > input { width: 68px; }
  .knobbtns { display: flex; border: 1px solid #343434; border-radius: 2px; height: 18px; width: 70px; }
  .knobbtns button { flex: 1; border-right: 1px solid #343434; }
  .knobbtns button:last-child { border-right: 0; }
  .swatch { width: 12px; height: 12px; background: #fff; border: 1px solid #111; }
  .black { background: #000; }
  .wheel { width: 12px; height: 12px; border-radius: 50%; background: radial-gradient(circle, #ffffffa0, #ffffff10 80%), conic-gradient(#f07ae0, #f09070, #e8e060, #50e070, #40d0e8, #5a70f0, #f07ae0); }

  .sbar { display: flex; flex-direction: column; width: 16px; flex: none; background: #3a3a3a; }
  .sbar button { height: 14px; background: #464646; border: 1px solid #2c2c2c; }
  .grip { height: 273px; border: 1px solid #2c2c2c; background: #464646; }
  .grow { flex: 1; }
  .corner { margin: 4px 0 1px auto; }
  .watermark { position: absolute; right: 68px; bottom: 32px; display: flex; align-items: center; gap: 6px; opacity: 0.5; pointer-events: none; font-size: 14px; color: #bbb; }
</style>
